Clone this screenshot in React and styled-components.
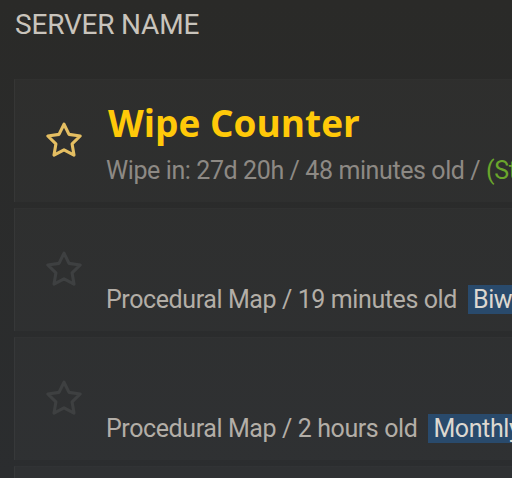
import React from "react";
import styled, { createGlobalStyle } from "styled-components";

const GlobalStyle = createGlobalStyle`
  html, body {
    margin: 0;
    padding: 0;
    background: #2a2a28;
    overflow: hidden;
  }
  body {
    font-family: Roboto, "Liberation Sans", sans-serif;
  }
`;

const servers = [
  {
    favorite: true,
    title: "Wipe Counter",
    info: "Wipe in: 27d 20h / 48 minutes old / ",
    extra: "(Standard)",
  },
  {
    info: "Procedural Map / 19 minutes old",
    badge: "Biweekly",
  },
  {
    info: "Procedural Map / 2 hours old",
    badge: "Monthly",
  },
  {
    info: "Procedural Map / 5 hours old",
    badge: "Weekly",
  },
];

const StarIcon = ({ active }) => (
  <svg width="48" height="48" viewBox="0 0 24 24">
    <path
      d="M12 3.6l2.5 5.1 5.6.8-4.05 3.95.95 5.6L12 16.4l-5 2.65.95-5.6L3.9 9.5l5.6-.8z"
      fill="none"
      stroke={active ? "#e4be62" : "#3e4041"}
      strokeWidth="1.55"
      strokeLinejoin="round"
    />
  </svg>
);

const ServerRow = ({ favorite, title, info, extra, badge }) => {
  return (
    <Row>
      <StarCell>
        <StarIcon active={favorite} />
      </StarCell>
      <RowBody>
        {title && <Title>{title}</Title>}
        <Info $active={favorite}>
          {info}
          {extra && <Extra>{extra}</Extra>}
          {badge && <Badge>{badge}</Badge>}
        </Info>
      </RowBody>
    </Row>
  );
};

const App = () => {
  return (
    <Page>
      <GlobalStyle />
      <Heading>SERVER NAME</Heading>
      <List>
        {servers.map((s, i) => (
          <ServerRow key={i} {...s} />
        ))}
      </List>
    </Page>
  );
};

const Page = styled.div`
  width: 512px;
  height: 478px;
  background: linear-gradient(180deg, #2a2a28 0%, #2b2d2f 100%);
  padding: 0 0 0 14px;
  box-sizing: border-box;
`;

const Heading = styled.h1`
  margin: 0;
  padding: 8px 0 0 1px;
  height: 79px;
  box-sizing: border-box;
  font-family: Roboto, "Liberation Sans", sans-serif;
  font-weight: 400;
  font-size: 28px;
  letter-spacing: -0.2px;
  line-height: 34px;
  color: #c9c4bc;
  white-space: nowrap;
`;

const List = styled.div`
  display: flex;
  flex-direction: column;
  gap: 6px;
`;

const Row = styled.section`
  display: flex;
  flex: none;
  height: 123px;
  box-sizing: border-box;
  background: rgba(255, 255, 255, 0.02);
  border-left: 1px solid rgba(255, 255, 255, 0.035);
  border-top: 1px solid rgba(255, 255, 255, 0.012);
  overflow: hidden;
  white-space: pre;
`;

const StarCell = styled.div`
  width: 91px;
  flex: none;
  display: flex;
  align-items: center;
  padding-left: 25px;
  box-sizing: border-box;
`;

const RowBody = styled.div`
  display: flex;
  flex-direction: column;
  justify-content: flex-end;
  padding-bottom: 16px;
`;

const Title = styled.div`
  font-family: "Open Sans", "Noto Sans", sans-serif;
  font-weight: 700;
  font-size: 37px;
  line-height: 40px;
  color: #ffc909;
  margin: 0 0 13px 2px;
`;

const Info = styled.div`
  font-size: 25px;
  letter-spacing: -0.4px;
  line-height: 30px;
  color: ${(p) => (p.$active ? "#8d8984" : "#b3aea7")};
`;

const Extra = styled.span`
  color: #6aa62c;
`;

const Badge = styled.span`
  display: inline-block;
  margin-left: 11px;
  padding: 0 5px;
  background: #294a6c;
  color: #ddd8d0;
  line-height: 29px;
`;

export default App;
